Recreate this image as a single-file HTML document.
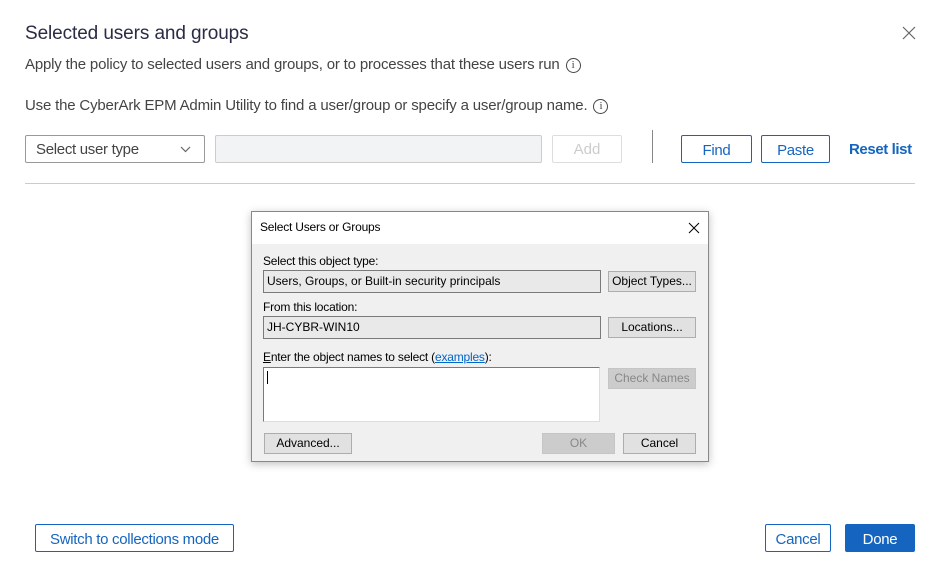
<!DOCTYPE html>
<html><head><meta charset="utf-8"><style>
*{box-sizing:border-box;margin:0;padding:0}
body{width:941px;height:569px;background:#fff;font-family:"Liberation Sans",sans-serif;position:relative;overflow:hidden;color:#333}
.a{position:absolute}
.t{font-size:19px;color:#2a2c44;left:25px;top:23px;letter-spacing:-0.1px}
.p{font-size:15px;color:#444;letter-spacing:-0.18px}
.info{display:inline-block;width:15px;height:15px;border:1.2px solid #444;border-radius:50%;font-size:11px;text-align:center;line-height:13px;font-family:"Liberation Serif",serif;vertical-align:1px;margin-left:2px}
.btn{border:1px solid #1565c0;border-radius:2px;color:#1565c0;font-size:15px;text-align:center;line-height:29px;background:#fff;letter-spacing:-0.3px}
.d{font-size:12px;color:#000;letter-spacing:-0.2px}
.wb{background:#e1e1e1;border:1px solid #adadad;font-size:12px;text-align:center;line-height:19px;color:#000}
.fld{background:#e9e9e9;border:1px solid #7a7a7a;font-size:12px;padding-left:3px;line-height:20px;color:#000}
</style></head><body>
<div class="a t">Selected users and groups</div>
<svg class="a" style="left:902px;top:26px" width="14" height="14"><path d="M1 1L13 13M13 1L1 13" stroke="#666" stroke-width="1.2"/></svg>
<div class="a p" style="left:25px;top:56px">Apply the policy to selected users and groups, or to processes that these users run <span class="info">i</span></div>
<div class="a p" style="left:25px;top:97px">Use the CyberArk EPM Admin Utility to find a user/group or specify a user/group name. <span class="info">i</span></div>
<div class="a" style="left:25px;top:135px;width:180px;height:28px;border:1px solid #999;border-radius:2px;font-size:15px;color:#444;padding-left:10px;line-height:28px;letter-spacing:-0.3px">Select user type
<svg class="a" style="left:154px;top:10px" width="11" height="7"><path d="M1 1L5.5 5.5L10 1" stroke="#666" fill="none" stroke-width="1.2"/></svg></div>
<div class="a" style="left:215px;top:135px;width:327px;height:28px;border:1px solid #ccc;border-radius:2px;background:#f2f3f5"></div>
<div class="a" style="left:552px;top:135px;width:70px;height:28px;border:1px solid #ddd;border-radius:2px;color:#ccc;font-size:15px;text-align:center;line-height:28px">Add</div>
<div class="a" style="left:652px;top:130px;width:1px;height:33px;background:#888"></div>
<div class="a btn" style="left:681px;top:135px;width:71px;height:28px">Find</div>
<div class="a btn" style="left:761px;top:135px;width:69px;height:28px">Paste</div>
<div class="a" style="left:849px;top:141px;font-size:15px;color:#1565c0;font-weight:bold;letter-spacing:-0.4px">Reset list</div>
<div class="a" style="left:25px;top:183px;width:890px;height:1px;background:#ccc"></div>

<div class="a" style="left:251px;top:211px;width:458px;height:251px;border:1px solid #888;background:#f0f0f0;box-shadow:0 2px 8px rgba(0,0,0,.25)">
 <div class="a" style="left:0;top:0;width:456px;height:32px;background:#fff"></div>
 <div class="a d" style="left:8px;top:8px">Select Users or Groups</div>
 <svg class="a" style="left:436px;top:10px" width="12" height="12"><path d="M1 1L11 11M11 1L1 11" stroke="#000" stroke-width="1"/></svg>
 <div class="a d" style="left:11px;top:42px">Select this object type:</div>
 <div class="a fld" style="left:11px;top:58px;width:338px;height:23px">Users, Groups, or Built-in security principals</div>
 <div class="a wb" style="left:356px;top:59px;width:88px;height:21px">Object Types...</div>
 <div class="a d" style="left:11px;top:88px">From this location:</div>
 <div class="a fld" style="left:11px;top:104px;width:338px;height:23px">JH-CYBR-WIN10</div>
 <div class="a wb" style="left:356px;top:105px;width:88px;height:21px">Locations...</div>
 <div class="a d" style="left:11px;top:138px"><u>E</u>nter the object names to select (<span style="color:#0066cc;text-decoration:underline">examples</span>):</div>
 <div class="a" style="left:11px;top:155px;width:337px;height:55px;background:#fff;border:1px solid #7a7a7a;border-right-color:#ddd;border-bottom-color:#ddd"><div class="a" style="left:3px;top:3px;width:1px;height:13px;background:#000"></div></div>
 <div class="a wb" style="left:356px;top:156px;width:88px;height:21px;color:#888;border-color:#c5c5c5;background:#ccc">Check Names</div>
 <div class="a wb" style="left:12px;top:221px;width:88px;height:21px">Advanced...</div>
 <div class="a wb" style="left:290px;top:221px;width:73px;height:21px;color:#888;border-color:#c5c5c5;background:#ccc">OK</div>
 <div class="a wb" style="left:371px;top:221px;width:73px;height:21px">Cancel</div>
</div>

<div class="a btn" style="left:35px;top:524px;width:199px;height:28px">Switch to collections mode</div>
<div class="a btn" style="left:765px;top:524px;width:66px;height:28px">Cancel</div>
<div class="a btn" style="left:845px;top:524px;width:70px;height:28px;background:#1565c0;color:#fff">Done</div>
</body></html>
